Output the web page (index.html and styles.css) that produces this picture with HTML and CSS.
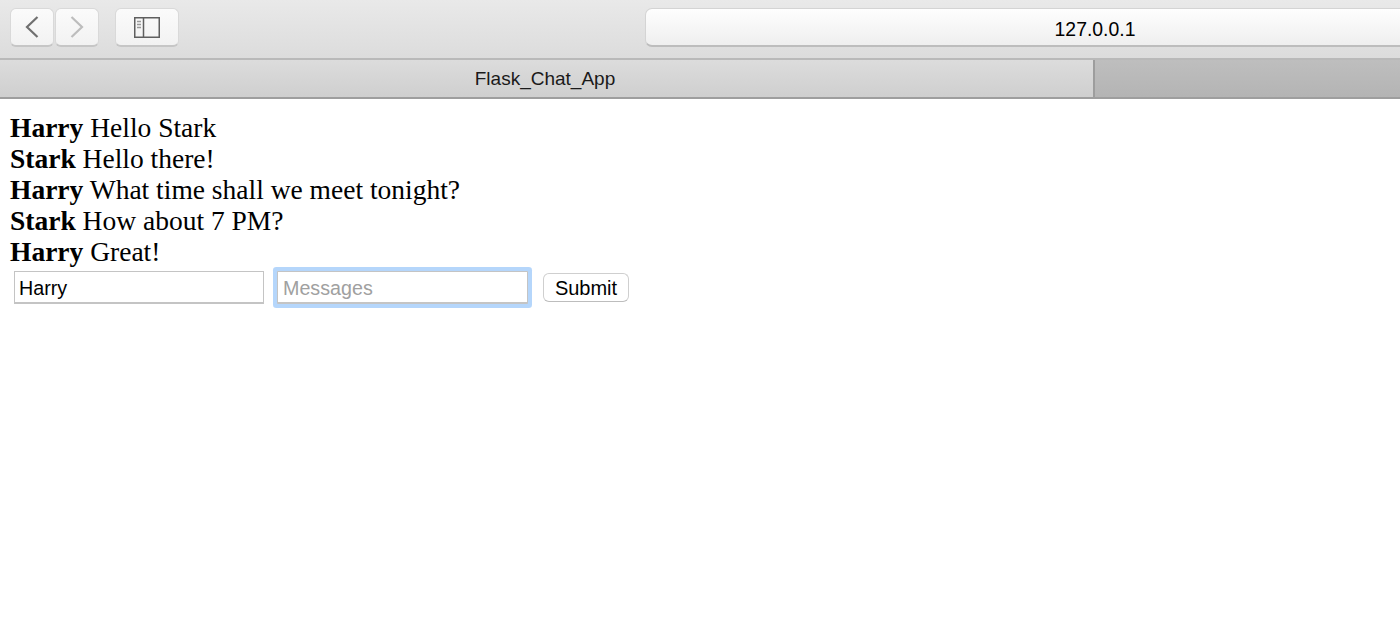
FILE: index.html
```html
<!DOCTYPE html>
<html lang="en">
<head>
<meta charset="utf-8">
<title>Flask_Chat_App</title>
<link rel="stylesheet" href="styles.css">
</head>
<body>
<header class="toolbar">
  <div class="nav-group">
    <button class="tool tool-nav" aria-label="Back">
      <svg width="16" height="26" viewBox="0 0 16 26"><path d="M13.5 3 L3 13 L13.5 23" fill="none" stroke="#707070" stroke-width="2.2"/></svg>
    </button>
    <button class="tool tool-nav" aria-label="Forward">
      <svg width="16" height="26" viewBox="0 0 16 26"><path d="M2.5 3 L13 13 L2.5 23" fill="none" stroke="#bdbdbd" stroke-width="2.2"/></svg>
    </button>
  </div>
  <button class="tool tool-side" aria-label="Sidebar">
    <svg width="26" height="21" viewBox="0 0 26 21"><rect x="0.75" y="0.75" width="24.5" height="19.5" fill="none" stroke="#5f5f5f" stroke-width="1.5"/><path d="M9.5 1 V20" stroke="#5f5f5f" stroke-width="1.5"/><path d="M3 4.5 H7 M3 7.5 H7 M3 10.5 H7" stroke="#999" stroke-width="1.3"/></svg>
  </button>
  <div class="address">127.0.0.1</div>
</header>
<nav class="tabs">
  <div class="tab-active">Flask_Chat_App</div>
  <div class="tab-rest"></div>
</nav>
<main class="page">
  <div class="messages">
    <div><b>Harry</b> Hello Stark</div>
    <div><b>Stark</b> Hello there!</div>
    <div><b>Harry</b> What time shall we meet tonight?</div>
    <div><b>Stark</b> How about 7 PM?</div>
    <div><b>Harry</b> Great!</div>
  </div>
  <form class="chat-form">
    <input class="field field-name" type="text" value="Harry">
    <input class="field field-msg" type="text" placeholder="Messages">
    <button class="submit" type="button">Submit</button>
  </form>
</main>
</body>
</html>
```
FILE: styles.css
```css
* { box-sizing: border-box; }
html, body { margin: 0; height: 100%; background: #fff; overflow: hidden; }
body { font-family: "Liberation Sans", Arial, sans-serif; color: #000; }

.toolbar {
  height: 60px;
  display: flex;
  align-items: flex-start;
  padding: 8px 0 0 10px;
  overflow: hidden;
  background: linear-gradient(#e9e9e9, #dcdcdc);
  border-bottom: 2px solid #b9b9b9;
}
.nav-group { display: flex; flex: none; gap: 1px; margin-right: 16px; }
.tool {
  flex: none;
  height: 39px;
  padding: 0;
  display: flex;
  align-items: center;
  justify-content: center;
  background: linear-gradient(#fbfbfb, #f2f2f2);
  border: 1px solid #d9d9d9;
  border-bottom: 2px solid #c6c6c6;
  border-radius: 6px;
}
.tool-nav { width: 44px; }
.tool-side { width: 64px; margin-right: 466px; }
.address {
  flex: 0 0 900px;
  height: 39px;
  display: flex;
  align-items: center;
  justify-content: center;
  padding-top: 4px;
  font-size: 19.4px;
  background: linear-gradient(#fefefe, #efefef);
  border: 1px solid #d4d4d4;
  border-bottom: 2px solid #bdbdbd;
  border-radius: 7px;
}

.tabs {
  height: 39px;
  display: flex;
  border-bottom: 2px solid #9e9e9e;
}
.tab-active {
  width: 1093px;
  flex: none;
  display: flex;
  align-items: center;
  justify-content: center;
  padding: 1px 3px 0 0;
  font-size: 19px;
  color: #1a1a1a;
  background: linear-gradient(#dcdcdc, #cfcfcf);
}
.tab-rest {
  flex: 1;
  background: linear-gradient(#bebebe, #b4b4b4);
  border-left: 2px solid #9d9d9d;
}

.page { padding: 13px 0 0 10px; }
.messages {
  font-family: "Liberation Serif", "Times New Roman", serif;
  font-size: 27.5px;
  line-height: 31px;
}
.chat-form { display: flex; align-items: flex-start; margin-top: 4px; padding-left: 4px; }
.field {
  height: 33px;
  padding: 2px 5px 0 4px;
  margin: 0;
  font-family: "Liberation Sans", Arial, sans-serif;
  font-size: 19.7px;
  color: #000;
  background: #fff;
  border: 1px solid #c4c4c4;
  border-bottom-width: 2px;
  border-radius: 0;
  outline: none;
}
.field::placeholder { color: #a0a0a0; opacity: 1; }
.field-name { width: 250px; margin-right: 13px; }
.field-msg {
  width: 251px;
  height: 33px;
  padding-left: 5px;
  box-shadow: 0 0 0 4px #b5d6fb;
  border-radius: 1px;
  margin-right: 15px;
}
.submit {
  width: 86px;
  height: 29px;
  margin-top: 2px;
  padding: 1px 0 0;
  font-family: "Liberation Sans", Arial, sans-serif;
  font-size: 20px;
  color: #000;
  background: #fff;
  border: 1px solid #cfcfcf;
  border-bottom-color: #bdbdbd;
  border-radius: 6px;
}
```
